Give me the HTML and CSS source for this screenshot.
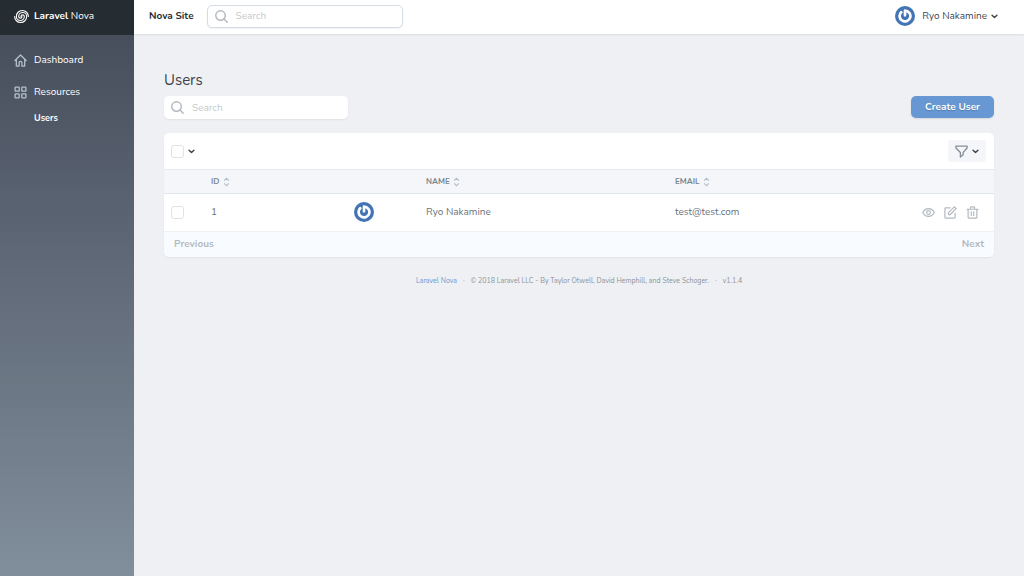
FILE: index.html
```html
<!DOCTYPE html>
<html lang="en">
  <head>
    <meta charset="UTF-8">
    <meta name="viewport" content="width=device-width, initial-scale=1.0">
    <title>Users | Nova Site</title>
    <link rel="stylesheet" href="styles.css">
  </head>
  <body>
    <svg class="sprite" aria-hidden="true">
      <symbol id="icon-search" viewBox="0 0 20 20">
        <path fill="none" stroke="currentColor" stroke-width="2.2" stroke-linecap="round" d="M13.5 13.5L18.8 18.8M8.5 1.2a7.3 7.3 0 1 1 0 14.6a7.3 7.3 0 1 1 0-14.6z"/>
      </symbol>
      <symbol id="icon-chevron" viewBox="0 0 10 6">
        <path fill="none" stroke="currentColor" stroke-width="2" stroke-linecap="round" stroke-linejoin="round" d="M1.5 1.2L5 4.5l3.5-3.3"/>
      </symbol>
      <symbol id="icon-sort" viewBox="0 0 8 12">
        <path fill="none" stroke="currentColor" stroke-width="1.3" stroke-linecap="round" stroke-linejoin="round" d="M1.5 4L4 1.5 6.5 4M1.5 8L4 10.5 6.5 8"/>
      </symbol>
      <symbol id="icon-avatar" viewBox="0 0 40 40">
        <circle cx="20" cy="20" r="20" fill="#4374b4"/>
        <path fill="#fff" transform="translate(6.5 6.5)" d="M10.8 2.7v9.45a2.7 2.7 0 0 0 5.4 0V5.86a8.1 8.1 0 1 1-8.42 1.91 2.7 2.7 0 0 0-3.82-3.82A13.5 13.5 0 1 0 13.5 0a2.7 2.7 0 0 0-2.7 2.7z"/>
      </symbol>
    </svg>

    <div class="app">
      <aside class="sidebar">
        <a class="logo" href="#">
          <svg class="logo-mark" viewBox="0 0 32 32" fill="none" stroke="currentColor" stroke-width="2.4" stroke-linecap="round">
            <path d="M17 16A3.5 3.5 0 0 1 10 16A8.5 8.5 0 0 1 27 16A12.8 12.8 0 0 1 1.400 16"/>
            <path d="M15 16A3.5 3.5 0 0 1 22 16A8.5 8.5 0 0 1 5 16A12.8 12.8 0 0 1 30.600 16"/>
          </svg>
          <span><strong>Laravel</strong> Nova</span>
        </a>
        <nav class="nav">
          <a class="nav-item" href="#">
            <svg class="nav-icon" viewBox="0 0 14 14" fill="none" stroke="currentColor" stroke-width="1.4" stroke-linecap="round" stroke-linejoin="round">
              <path d="M1 7l6-6 6 6M2.5 6v7h3V9.5a1.5 1.5 0 0 1 3 0V13h3V6"/>
            </svg>
            Dashboard
          </a>
          <a class="nav-item" href="#">
            <svg class="nav-icon" viewBox="0 0 14 14" fill="none" stroke="currentColor" stroke-width="1.4">
              <rect x="1.2" y="1.2" width="4.4" height="4.4" rx="0.6"/>
              <rect x="8.4" y="1.2" width="4.4" height="4.4" rx="0.6"/>
              <rect x="1.2" y="8.4" width="4.4" height="4.4" rx="0.6"/>
              <rect x="8.4" y="8.4" width="4.4" height="4.4" rx="0.6"/>
            </svg>
            Resources
          </a>
          <a class="nav-sub" href="#">Users</a>
        </nav>
      </aside>

      <div class="content">
        <header class="header">
          <a class="site-name" href="#">Nova Site</a>
          <label class="search search-global">
            <svg class="search-icon"><use href="#icon-search"/></svg>
            <input type="search" placeholder="Search" aria-label="Global search">
          </label>
          <button class="user-menu" type="button">
            <svg class="avatar"><use href="#icon-avatar"/></svg>
            Ryo Nakamine
            <svg class="chevron"><use href="#icon-chevron"/></svg>
          </button>
        </header>

        <main class="main">
          <h1>Users</h1>
          <div class="toolbar">
            <label class="search">
              <svg class="search-icon"><use href="#icon-search"/></svg>
              <input type="search" placeholder="Search" aria-label="Search users">
            </label>
            <button class="btn" type="button">Create User</button>
          </div>

          <div class="card">
            <div class="card-head">
              <div class="select-all">
                <input class="checkbox" type="checkbox" aria-label="Select all">
                <button class="icon-btn" type="button" aria-label="Selection options">
                  <svg class="chevron"><use href="#icon-chevron"/></svg>
                </button>
              </div>
              <button class="filter-btn" type="button" aria-label="Filters">
                <svg class="filter-icon" viewBox="0 0 14 14" fill="none" stroke="currentColor" stroke-width="1.4" stroke-linejoin="round">
                  <path d="M1 1.2h12v2L8.8 8v2.6L5.8 13V8L1 3.2z"/>
                </svg>
                <svg class="chevron"><use href="#icon-chevron"/></svg>
              </button>
            </div>
            <table>
              <thead>
                <tr>
                  <th class="col-check"></th>
                  <th class="col-id">ID <svg class="sort"><use href="#icon-sort"/></svg></th>
                  <th class="col-avatar"></th>
                  <th class="col-name">Name <svg class="sort"><use href="#icon-sort"/></svg></th>
                  <th class="col-email">Email <svg class="sort"><use href="#icon-sort"/></svg></th>
                  <th class="col-actions"></th>
                </tr>
              </thead>
              <tbody>
                <tr>
                  <td class="col-check"><input class="checkbox" type="checkbox" aria-label="Select user 1"></td>
                  <td>1</td>
                  <td class="col-avatar"><svg class="avatar"><use href="#icon-avatar"/></svg></td>
                  <td>Ryo Nakamine</td>
                  <td>test@test.com</td>
                  <td>
                    <div class="actions">
                      <a href="#" aria-label="View">
                        <svg class="action-icon" viewBox="0 0 14 14" fill="none" stroke="currentColor" stroke-width="1.3">
                          <path d="M.8 7c1.3-2.7 3.6-4.2 6.2-4.2s4.9 1.5 6.2 4.2c-1.3 2.7-3.6 4.2-6.2 4.2S2.1 9.7.8 7z"/>
                          <circle cx="7" cy="7" r="2"/>
                        </svg>
                      </a>
                      <a href="#" aria-label="Edit">
                        <svg class="action-icon" viewBox="0 0 14 14" fill="none" stroke="currentColor" stroke-width="1.3" stroke-linecap="round" stroke-linejoin="round">
                          <path d="M6.5 2H1.8a.8.8 0 0 0-.8.8v9.4c0 .5.3.8.8.8h9.4c.5 0 .8-.3.8-.8V8"/>
                          <path d="M11.2.9l1.9 1.9-6.3 6.4H4.8V7.2z"/>
                        </svg>
                      </a>
                      <button class="icon-btn" type="button" aria-label="Delete">
                        <svg class="action-icon" viewBox="0 0 14 14" fill="none" stroke="currentColor" stroke-width="1.3" stroke-linecap="round" stroke-linejoin="round">
                          <path d="M1 3.5h12M2.3 3.5v8.7c0 .5.3.8.8.8h7.8c.5 0 .8-.3.8-.8V3.5M4.8 3.5V1.6c0-.4.2-.6.6-.6h3.2c.4 0 .6.2.6.6v1.9M5.7 6.2v4M8.3 6.2v4"/>
                        </svg>
                      </button>
                    </div>
                  </td>
                </tr>
              </tbody>
            </table>
            <div class="pagination">
              <button type="button" disabled>Previous</button>
              <button type="button" disabled>Next</button>
            </div>
          </div>

          <footer class="footer">
            <a href="#">Laravel Nova</a>
            <span>·</span>
            <span>© 2018 Laravel LLC - By Taylor Otwell, David Hemphill, and Steve Schoger.</span>
            <span>·</span>
            <span>v1.1.4</span>
          </footer>
        </main>
      </div>
    </div>
  </body>
</html>
```

FILE: styles.css
```css
* {
  box-sizing: border-box;
}

body {
  margin: 0;
  font-family: Nunito, Lato, sans-serif;
  font-size: 10px;
  line-height: 16px;
  color: #6b7278;
  background-color: #eef0f4;
}

a {
  color: inherit;
  text-decoration: none;
}

button {
  padding: 0;
  border: none;
  background: none;
  font: inherit;
  color: inherit;
  cursor: pointer;
}

svg {
  display: block;
  flex: none;
}

.sprite {
  position: absolute;
  width: 0;
  height: 0;
}

.app {
  display: flex;
  min-height: 100vh;
}

/* Sidebar */
.sidebar {
  flex: none;
  width: 134px;
  color: #fff;
  background: linear-gradient(#434a58, #818e9b);
}

.logo {
  display: flex;
  align-items: center;
  gap: 5px;
  height: 35px;
  padding: 0 14px 3px;
  background-color: #252d33;
}

.logo-mark {
  width: 15px;
  height: 15px;
}

.nav {
  padding-top: 17px;
}

.nav-item {
  display: flex;
  align-items: center;
  gap: 7px;
  height: 16px;
  margin-bottom: 16px;
  padding-left: 14px;
}

.nav-icon {
  width: 13px;
  height: 13px;
  color: #b3c1cc;
}

.nav-sub {
  display: block;
  margin-top: -6px;
  padding-left: 34px;
  font-size: 9px;
  font-weight: bold;
}

/* Header */
.content {
  flex: 1;
  min-width: 0;
}

.header {
  display: flex;
  align-items: center;
  height: 34px;
  padding: 0 26px 2px 15px;
  background-color: #fff;
  box-shadow: 0 1px 2px rgba(0, 0, 0, 0.08);
}

.site-name {
  margin-right: 13px;
  font-weight: bold;
  color: #252d33;
}

.search {
  display: flex;
  align-items: center;
  gap: 8px;
  width: 184px;
  height: 23px;
  padding: 0 7px;
  border-radius: 5px;
  background-color: #fff;
  box-shadow: 0 1px 2px rgba(0, 0, 0, 0.06);
}

.search-global {
  width: 196px;
  border: 1px solid #d5dce3;
}

.search-icon {
  width: 13px;
  height: 13px;
  color: #b3b9bf;
}

.search input {
  flex: 1;
  min-width: 0;
  padding: 0;
  border: none;
  outline: none;
  background: none;
  font: inherit;
}

.search input::placeholder {
  color: #c5c9cd;
}

.user-menu {
  display: flex;
  align-items: center;
  gap: 7px;
  margin-left: auto;
  color: #3c4655;
}

.avatar {
  width: 20px;
  height: 20px;
}

.user-menu .chevron {
  margin-left: -3px;
}

.chevron {
  width: 7px;
  height: 5px;
  color: #3c4248;
}

/* Resource index */
.main {
  padding: 37px 30px 24px;
}

h1 {
  margin: 0 0 7px;
  font-size: 15px;
  font-weight: normal;
  line-height: 18px;
  color: #3c4248;
}

.toolbar {
  display: flex;
  align-items: flex-start;
  justify-content: space-between;
  margin-bottom: 14px;
}

.btn {
  height: 22px;
  padding: 0 14px;
  border-radius: 5px;
  font-weight: bold;
  color: #fff;
  background-color: #6798d3;
  box-shadow: 0 1px 2px rgba(0, 0, 0, 0.1);
  text-shadow: 0 1px 1px rgba(0, 0, 0, 0.2);
}

.card {
  overflow: hidden;
  border-radius: 5px;
  background-color: #fff;
  box-shadow: 0 1px 2px rgba(0, 0, 0, 0.06);
}

.card-head {
  display: flex;
  align-items: center;
  justify-content: space-between;
  height: 36px;
  padding: 0 8px 0 7px;
}

.select-all {
  display: flex;
  align-items: center;
  gap: 4px;
}

.checkbox {
  display: block;
  width: 13px;
  height: 13px;
  margin: 0;
  border: 1px solid #dfe3e7;
  border-radius: 3px;
  appearance: none;
}

.filter-btn {
  display: flex;
  align-items: center;
  gap: 4px;
  height: 22px;
  padding: 0 7px;
  border-radius: 3px;
  background-color: #f4f6fa;
}

.filter-icon {
  width: 13px;
  height: 13px;
  color: #858d96;
}

table {
  width: 100%;
  table-layout: fixed;
  border-collapse: collapse;
}

th,
td {
  padding: 0;
  text-align: left;
}

th {
  height: 24px;
  border-top: 1px solid #e6eaee;
  border-bottom: 1px solid #e0e5ea;
  font-size: 8px;
  text-transform: uppercase;
  color: #7c858e;
  background-color: #f4f6fa;
}

td {
  height: 37px;
}

.col-check {
  width: 47px;
  padding-left: 7px;
}

.col-id {
  width: 100px;
}

.col-avatar {
  width: 115px;
  padding-left: 43px;
}

.col-name {
  width: 249px;
}

.col-actions {
  width: 90px;
}

.sort {
  display: inline-block;
  width: 7px;
  height: 10px;
  margin-left: 1px;
  vertical-align: middle;
  color: #b3bfca;
}

.actions {
  display: flex;
  justify-content: flex-end;
  gap: 9px;
  padding-right: 15px;
  color: #b3b9bf;
}

.action-icon {
  width: 13px;
  height: 13px;
}

.pagination {
  display: flex;
  justify-content: space-between;
  padding: 4px 10px 5px;
  border-top: 1px solid #eef1f4;
  background-color: #f8fbff;
}

.pagination button {
  font-weight: bold;
  color: #b3b9bf;
}

.footer {
  display: flex;
  justify-content: center;
  gap: 6px;
  margin-top: 16px;
  font-size: 7px;
  color: #8b9299;
}

.footer a {
  color: #6798d3;
}
```
